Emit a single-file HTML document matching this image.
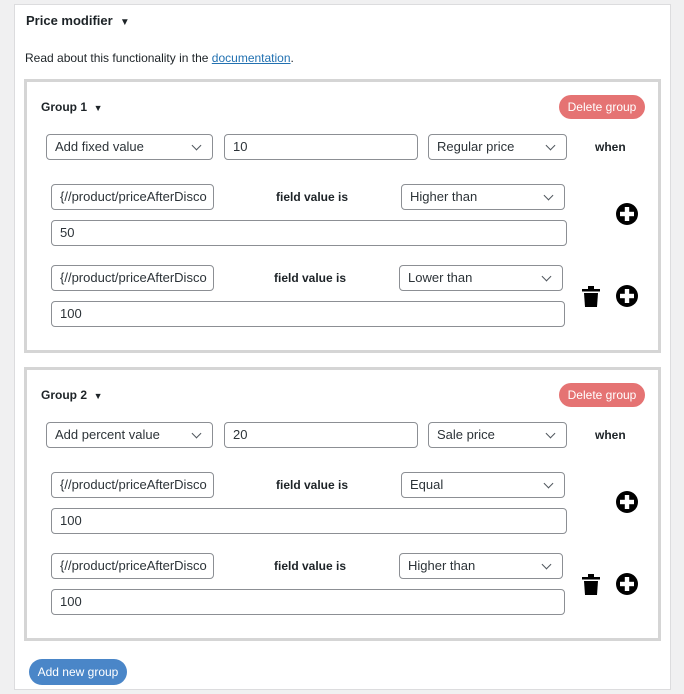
<!DOCTYPE html>
<html><head><style>
body{margin:0;width:684px;height:694px;background:#f0f0f1;font-family:"Liberation Sans",sans-serif;font-size:13px;color:#1d2327;position:relative;overflow:hidden}
.a{position:absolute;box-sizing:border-box}
.panel{left:14px;top:4px;width:657px;height:686px;background:#fff;border:1px solid #dcdcde}
.grp{left:24px;width:637px;height:274px;border:3px solid #d5d5d5;background:#fff}
.in{border:1px solid #8c8f94;border-radius:4px;background:#fff;height:26px;line-height:24px;padding-left:8px;font-size:13px;color:#2c3338;white-space:nowrap;overflow:hidden}
.sel::after{content:"";position:absolute;right:12px;top:7px;width:6px;height:6px;border-right:1.5px solid #50575e;border-bottom:1.5px solid #50575e;transform:rotate(45deg)}
.b{font-weight:bold;font-size:12px}
.del{background:#e57373;color:#fff;border-radius:13px;height:24px;line-height:24px;text-align:center;font-size:12px}
</style></head><body>
<div class="a panel"></div>
<div class="a b" style="left:26px;top:13px;font-size:13px">Price modifier&nbsp;&nbsp;<span style="font-size:10px">▼</span></div>
<div class="a" style="left:25px;top:51px;font-size:12px">Read about this functionality in the <span style="color:#2271b1;text-decoration:underline">documentation</span>.</div>

<div class="a grp" style="top:79px"></div>
<div class="a b" style="left:41px;top:100px">Group 1&nbsp;&nbsp;<span style="font-size:9px">▼</span></div>
<div class="a del" style="left:559px;top:95px;width:86px">Delete group</div>
<div class="a in sel" style="left:46px;top:134px;width:167px">Add fixed value</div>
<div class="a in" style="left:224px;top:134px;width:194px">10</div>
<div class="a in sel" style="left:428px;top:134px;width:139px">Regular price</div>
<div class="a b" style="left:595px;top:140px">when</div>
<div class="a in" style="left:51px;top:184px;width:163px">{//product/priceAfterDisco</div>
<div class="a b" style="left:276px;top:190px">field value is</div>
<div class="a in sel" style="left:401px;top:184px;width:164px">Higher than</div>
<div class="a in" style="left:51px;top:220px;width:516px">50</div>
<div class="a in" style="left:51px;top:265px;width:163px">{//product/priceAfterDisco</div>
<div class="a b" style="left:274px;top:271px">field value is</div>
<div class="a in sel" style="left:399px;top:265px;width:164px">Lower than</div>
<div class="a in" style="left:51px;top:301px;width:514px">100</div>

<div class="a grp" style="top:367px"></div>
<div class="a b" style="left:41px;top:388px">Group 2&nbsp;&nbsp;<span style="font-size:9px">▼</span></div>
<div class="a del" style="left:559px;top:383px;width:86px">Delete group</div>
<div class="a in sel" style="left:46px;top:422px;width:167px">Add percent value</div>
<div class="a in" style="left:224px;top:422px;width:194px">20</div>
<div class="a in sel" style="left:428px;top:422px;width:139px">Sale price</div>
<div class="a b" style="left:595px;top:428px">when</div>
<div class="a in" style="left:51px;top:472px;width:163px">{//product/priceAfterDisco</div>
<div class="a b" style="left:276px;top:478px">field value is</div>
<div class="a in sel" style="left:401px;top:472px;width:164px">Equal</div>
<div class="a in" style="left:51px;top:508px;width:516px">100</div>
<div class="a in" style="left:51px;top:553px;width:163px">{//product/priceAfterDisco</div>
<div class="a b" style="left:274px;top:559px">field value is</div>
<div class="a in sel" style="left:399px;top:553px;width:164px">Higher than</div>
<div class="a in" style="left:51px;top:589px;width:514px">100</div>

<svg class="a" style="left:0;top:0" width="684" height="694">
<defs>
<g id="p"><circle r="11" fill="#000"/><rect x="-7" y="-2.2" width="14" height="4.4" fill="#fff"/><rect x="-2.2" y="-7" width="4.4" height="14" fill="#fff"/></g>
<g id="t"><rect x="-9" y="-8" width="18" height="2.5" fill="#000"/><rect x="-3" y="-11" width="6" height="3" fill="#000"/><path d="M-7 -4 H7 L6 10 H-6 Z" fill="#000"/></g>
</defs>
<use href="#p" x="627" y="214"/>
<use href="#p" x="627" y="296"/>
<use href="#t" x="591" y="297"/>
<use href="#p" x="627" y="502"/>
<use href="#p" x="627" y="584"/>
<use href="#t" x="591" y="585"/>
</svg>

<div class="a" style="left:29px;top:659px;width:98px;height:26px;border-radius:13px;background:#4a86c8;color:#fff;text-align:center;line-height:26px;font-size:12px">Add new group</div>
</body></html>
